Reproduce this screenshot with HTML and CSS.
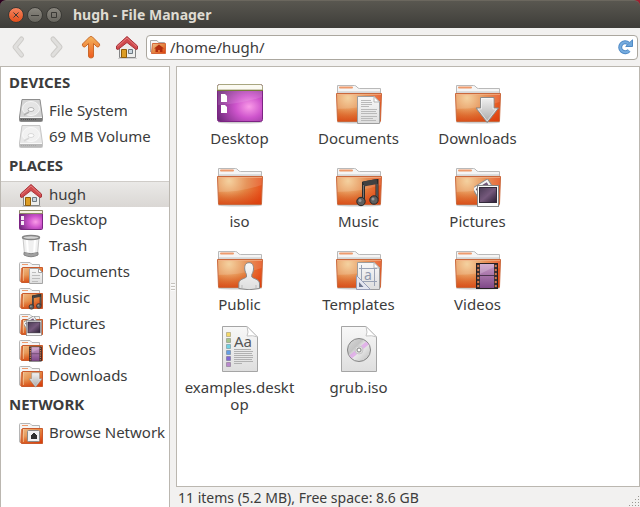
FILE: index.html
```html
<!doctype html>
<html lang="en">

<head>
  <meta charset="utf-8" />
  <meta name="viewport" content="width=device-width,initial-scale=1" />
  <title>hugh - File Manager</title>
  <link rel="stylesheet" href="styles.css">
</head>

<body>
  <svg class="sprites" width="0" height="0" aria-hidden="true">
    <defs>
      <radialGradient id="g-folder" gradientUnits="userSpaceOnUse" cx="13" cy="22" r="36">
        <stop offset="0" stop-color="#f3cb92" />
        <stop offset=".5" stop-color="#e38443" />
        <stop offset="1" stop-color="#e84a16" />
      </radialGradient>
      <linearGradient id="g-small" x1="0" y1="0" x2="1" y2="1">
        <stop offset="0" stop-color="#efc08c" />
        <stop offset=".5" stop-color="#e48742" />
        <stop offset="1" stop-color="#dc3c0c" />
      </linearGradient>
      <linearGradient id="g-base" x1="0" y1="0" x2="0" y2="1">
        <stop offset=".5" stop-color="#d8430f" stop-opacity="0" />
        <stop offset="1" stop-color="#d03a0a" stop-opacity=".6" />
      </linearGradient>
      <linearGradient id="g-paper" x1="0" y1="0" x2="0" y2="1">
        <stop offset="0" stop-color="#f8f8f8" />
        <stop offset="1" stop-color="#dedede" />
      </linearGradient>
      <linearGradient id="g-metal" x1="0" y1="0" x2="0" y2="1">
        <stop offset="0" stop-color="#f2f2f2" />
        <stop offset="1" stop-color="#a9a9a9" />
      </linearGradient>
      <radialGradient id="g-desk" cx=".7" cy=".6" r=".75">
        <stop offset="0" stop-color="#fa9be8" />
        <stop offset=".4" stop-color="#ce54cc" />
        <stop offset="1" stop-color="#70297c" />
      </radialGradient>
      <linearGradient id="g-photo" x1="0" y1="0" x2="1" y2="1">
        <stop offset="0" stop-color="#4a3b54" />
        <stop offset=".5" stop-color="#75597c" />
        <stop offset="1" stop-color="#291d33" />
      </linearGradient>
      <linearGradient id="g-film" x1="0" y1="0" x2="0" y2="1">
        <stop offset="0" stop-color="#c99bc6" />
        <stop offset="1" stop-color="#7f4788" />
      </linearGradient>
      <linearGradient id="g-up" x1="0" y1="0" x2="0" y2="1">
        <stop offset="0" stop-color="#f3b45c" />
        <stop offset="1" stop-color="#ee5a1e" />
      </linearGradient>
      <linearGradient id="g-disc" x1="0" y1="0" x2="1" y2="1">
        <stop offset="0" stop-color="#dcdcdc" />
        <stop offset=".35" stop-color="#c4c4c4" />
        <stop offset=".5" stop-color="#eeeeee" />
        <stop offset="1" stop-color="#bcbcbc" />
      </linearGradient>
    </defs>

    <!-- folders -->
    <symbol id="folder" viewBox="0 0 48 48">
      <ellipse cx="24" cy="46.5" rx="22" ry="1" fill="#0003" />
      <path d="M2.500 17V9.500H19.500Q21 9.500 22 11T24.500 12.500H45.500V17z" fill="#f5f5f5" stroke="#b9b9b9" />
      <path d="M5 11.500H17" stroke="#ee9a6c" stroke-width="2" stroke-linecap="round" />
      <path d="M3 15.500H45" stroke="#dedede" />
      <path d="M1.500 17.500H46.500L45.500 45Q45.500 45.500 45 45.500H3Q2.500 45.500 2.500 45z" fill="url(#g-folder)" />
      <path d="M1.500 17.500H46.500L45.500 45Q45.500 45.500 45 45.500H3Q2.500 45.500 2.500 45z" fill="url(#g-base)" stroke="#c9683c" />
      <path d="M2 18H46L45.600 26Q25 33 2.400 33z" fill="#fff" opacity=".13" />
      <path d="M2 18.500H46" stroke="#f3b48a" opacity=".7" />
    </symbol>
    <symbol id="folder-small" viewBox="0 0 24 24">
      <path d="M1 21.500Q.5 21.500 .5 20V3.500Q.5 2.500 1.500 2.500H11L13 4.500H20.500V8" fill="#f4f4f4" stroke="#b5b5b5" />
      <path d="M3 4.500H9" stroke="#ee9a6c" />
      <path d="M2 8H22V22H1z" fill="#e4834f" />
      <path d="M3.500 7.500H23.500V22.500H2.500z" fill="url(#g-small)" />
      <path d="M3.500 7.500H23.500V22.500H2.500z" fill="url(#g-base)" stroke="#ca5a2c" />
      <path d="M4.500 8V21" stroke="#f8cda5" opacity=".6" />
    </symbol>

    <!-- emblems laid over the lower right corner of a folder -->
    <symbol id="e-documents" viewBox="0 0 28 28">
      <path d="M2.500 .5H19L24.500 6V27.500H2.500z" fill="url(#g-paper)" stroke="#9d9d9d" />
      <path d="M19 .5V6H24.500z" fill="#fff" stroke="#b5b5b5" />
      <path d="M6 4.500H16M6 6.500H17M6 8.500H17M6 10.500H14M6 13.500H22M6 15.500H21M6 17.500H22M6 20.500H22M6 22.500H18M6 24.500H21" stroke="#b9b9b9" />
    </symbol>
    <symbol id="e-documents-small" viewBox="0 0 16 16">
      <path d="M1.500 .5H10.500L14.500 4.500V15.500H1.500z" fill="url(#g-paper)" stroke="#a5a5a5" />
      <path d="M10.500 .5V4.500H14.500z" fill="#fff" stroke="#a5a5a5" />
      <path d="M4 4.500H8M4 7.500H12M4 10.500H12M4 13.500H10" stroke="#bdbdbd" />
    </symbol>
    <symbol id="e-downloads" viewBox="0 0 28 28">
      <path d="M6.500 1.500H20V12H24.500L13.200 26.500L2 12H6.500z" fill="url(#g-metal)" stroke="#8b8b8b" />
      <path d="M7.500 2.500H19V13H22.500L13.200 25L4 13H7.500z" fill="none" stroke="#fff" opacity=".5" />
    </symbol>
    <symbol id="e-music" viewBox="0 0 28 28">
      <path d="M8.500 22V4L22 1.500V20" fill="none" stroke="#2b2b2b" stroke-width="3" />
      <path d="M8.500 5L22 2.500" stroke="#414141" stroke-width="5" />
      <path d="M8.500 21V6M22 19V5" stroke="#747474" />
      <circle cx="6" cy="22.500" r="4.200" fill="#5f5f5f" stroke="#282828" />
      <circle cx="19" cy="21" r="4.200" fill="#5f5f5f" stroke="#282828" />
      <circle cx="5" cy="21.500" r="1.500" fill="#999" />
      <circle cx="18" cy="20" r="1.500" fill="#999" />
    </symbol>
    <symbol id="e-pictures" viewBox="0 0 28 28">
      <g transform="rotate(-32 10 12)">
        <rect x="1.500" y="3.500" width="18" height="18" fill="#f4f4f4" stroke="#8b8b8b" />
        <rect x="4" y="6" width="13" height="12" fill="url(#g-photo)" />
      </g>
      <rect x="3.500" y="6.500" width="21" height="21" fill="#fafafa" stroke="#888" />
      <rect x="5.500" y="8.500" width="17" height="15" fill="url(#g-photo)" stroke="#332a3a" />
    </symbol>
    <symbol id="e-public" viewBox="0 0 28 28">
      <path d="M13 .7C9.500 .7 8.500 3.500 8.700 7C9 10 10 11 10.500 12.500V15C8 17 3.500 17 2.800 21V26.500Q13 29 23.500 26.500V21C22.500 17 18 17 15.800 15V12.500C16.500 11 17.300 10 17.500 7C17.700 3.500 16.500 .7 13 .7z" fill="url(#g-paper)" stroke="#888" />
      <path d="M6 23V26M20 23V26" stroke="#bbb" />
    </symbol>
    <symbol id="e-templates" viewBox="0 0 28 28">
      <path d="M2.500 .5H19L24.500 6V27.500H2.500z" fill="url(#g-paper)" stroke="#9d9d9d" />
      <path d="M19 .5V6H24.500z" fill="#fff" stroke="#b5b5b5" />
      <path d="M4 6.500H22M4 19.500H22M6.500 3V24M19.500 6V24" stroke="#9aa3b5" />
      <text x="13" y="18" text-anchor="middle" class="glyph-a">a</text>
      <path d="M1.500 13.500L15.500 27.500H1.500z" fill="#e3e6f0" stroke="#979fb8" />
      <path d="M4 20L8.500 25H4z" fill="#6f7891" />
    </symbol>
    <symbol id="e-videos" viewBox="0 0 28 28">
      <rect x="2.500" y="1.500" width="21" height="25" fill="#3b3033" stroke="#262023" />
      <rect x="6" y="2" width="14" height="24" fill="url(#g-film)" />
      <path d="M6 13.500H20" stroke="#4d3450" />
      <path d="M6 2H20V5L6 12z" fill="#fff" opacity=".2" />
      <path d="M4.200 3V26M21.800 3V26" stroke="#d07a50" stroke-width="2" stroke-dasharray="2 2" />
    </symbol>
    <symbol id="e-network" viewBox="0 0 16 16">
      <rect x=".5" y=".5" width="12" height="11" rx="1" fill="#f1f1f1" stroke="#8a8a8a" />
      <path d="M4 9V5H5V4H6V3H8V4H9V5H10V9z" fill="#2e2e2e" />
    </symbol>

    <!-- places and devices -->
    <symbol id="desktop" viewBox="0 0 48 48">
      <ellipse cx="24" cy="46.500" rx="22" ry="1" fill="#0003" />
      <rect x="1.500" y="8.500" width="45" height="37" rx="2" fill="url(#g-desk)" stroke="#7c2483" />
      <path d="M1.500 14V10.500Q1.500 8.500 3.500 8.500H44.500Q46.500 8.500 46.500 10.500V14z" fill="#fbfaf2" stroke="#a9a780" />
      <path d="M1 14.500H47" stroke="#78783d" />
      <path d="M2 15H46V21Q24 28 2 29z" fill="#fff" opacity=".12" />
      <path d="M5 18H9L11 20V26H5zM5 29H9L11 31V37H5z" fill="#fff" />
    </symbol>
    <symbol id="desktop-small" viewBox="0 0 24 24">
      <rect x=".5" y="2.500" width="23" height="19" rx="1" fill="url(#g-desk)" stroke="#7c2483" />
      <path d="M.5 5.500V2.500H23.500V5.500z" fill="#f3f1df" stroke="#8d8b66" />
      <path d="M2 8H5V12H2zM2 13H5V17H2z" fill="#fff" opacity=".9" />
    </symbol>
    <symbol id="home" viewBox="0 0 24 24">
      <path d="M4.500 12L12 5L20.500 12V22.500H4.500z" fill="#eeeeec" stroke="#858585" />
      <path d="M3 23.500H22" stroke="#0002" />
      <path d="M6.500 14.500H11.500V22.500H6.500z" fill="#dc9d25" stroke="#8f5d0a" />
      <path d="M13.500 14.500H17.500V18.500H13.500z" fill="#cad6df" stroke="#6e7a82" />
      <path d="M12 1.500L22.500 11V14L21 14.500L12 7.500L3 14.500L1.500 14V11z" fill="#d14a4d" stroke="#a8343a" stroke-linejoin="round" />
      <path d="M2.500 11.500L12 3L21.500 11.500" fill="none" stroke="#e27b7c" />
    </symbol>
    <symbol id="drive" viewBox="0 0 24 24">
      <path d="M3 .5H21L23.500 18V21.500Q23.500 22.500 22.500 22.500H1.500Q.5 22.500 .5 21.500V18z" fill="#d3d3d3" stroke="#8d8d8d" />
      <path d="M1 19H23V22H1z" fill="#777" />
      <path d="M1 18.500H23" stroke="#f4f4f4" />
      <path d="M2 20.500H17" stroke="#555" stroke-dasharray="1 1" />
      <ellipse cx="12" cy="9.500" rx="8.500" ry="7" fill="#e4e4e4" stroke="#f6f6f6" />
      <ellipse cx="12" cy="10.500" rx="3" ry="2" fill="#fafafa" stroke="#b4b4b4" />
      <path d="M5 16L10 13" stroke="#b0b0b0" stroke-width="1.500" />
    </symbol>
    <symbol id="trash" viewBox="0 0 24 24">
      <path d="M4 4H20L18.500 20Q12 24 5.500 20z" fill="#f0f0f0" stroke="#c9c9c9" />
      <path d="M8 6L9 20M16 6L15 20" stroke="#fff" stroke-width="2" />
      <path d="M5 18.500Q12 21 19 18.500V21Q12 24.500 5 21z" fill="#a2a2a2" stroke="#858585" />
      <ellipse cx="12" cy="3.500" rx="8.500" ry="2" fill="#d4d4d4" stroke="#858585" stroke-width="1.500" />
    </symbol>

    <!-- files -->
    <symbol id="page" viewBox="0 0 48 48">
      <path d="M6.500 1.500H31L41.500 12V46.500H6.500z" fill="url(#g-paper)" stroke="#a5a5a5" />
      <path d="M31 1.500Q33 8 31 11Q37 10 41.500 12z" fill="#fff" stroke="#c4c4c4" />
    </symbol>
    <symbol id="file-text" viewBox="0 0 48 48">
      <use href="#page" width="48" height="48" />
      <g stroke="#0003">
        <rect x="10.500" y="7.500" width="4" height="4" fill="#f4d868" />
        <rect x="10.500" y="13.500" width="4" height="4" fill="#a7c48b" />
        <rect x="10.500" y="19.500" width="4" height="4" fill="#70d1e4" />
        <rect x="10.500" y="25.500" width="4" height="4" fill="#659ee4" />
        <rect x="10.500" y="31.500" width="4" height="4" fill="#8067d5" />
        <rect x="10.500" y="37.500" width="4" height="4" fill="#b988cd" />
      </g>
      <text x="18" y="22" class="glyph-aa">Aa</text>
      <path d="M18 24.500H35M18 26.500H37M18 28.500H36M18 30.500H37M18 32.500H37M18 34.500H36M18 36.500H37M18 38.500H26" stroke="#b1b1b1" />
    </symbol>
    <symbol id="file-iso" viewBox="0 0 48 48">
      <use href="#page" width="48" height="48" />
      <circle cx="24" cy="25" r="11.500" fill="url(#g-disc)" stroke="#858585" />
      <path d="M15.500 32L32.500 18" stroke="#dfa6e8" stroke-width="4" opacity=".8" />
      <circle cx="24" cy="25" r="4" fill="#dedede" stroke="#c9c9c9" />
      <circle cx="24" cy="25" r="2" fill="#fff" stroke="#858585" />
    </symbol>
  </svg>

  <div class="window">
    <header class="titlebar">
      <button type="button" class="wbtn close" aria-label="Close">
        <svg viewBox="0 0 14 14"><path d="M4.500 4.500L9.500 9.500M9.500 4.500L4.500 9.500" /></svg>
      </button>
      <button type="button" class="wbtn" aria-label="Minimize">
        <svg viewBox="0 0 14 14"><path d="M3 7.500H11" /></svg>
      </button>
      <button type="button" class="wbtn" aria-label="Maximize">
        <svg viewBox="0 0 14 14"><path d="M4.500 4.500H9.500V9.500H4.500z" /></svg>
      </button>
      <h1 class="title">hugh - File Manager</h1>
    </header>

    <nav class="toolbar" aria-label="Navigation">
      <button type="button" class="tool" aria-label="Back" disabled>
        <svg viewBox="0 0 24 24">
          <path d="M14.500 4L8 12L14.500 20" class="arrow-edge" />
          <path d="M14.500 4L8 12L14.500 20" class="arrow" />
        </svg>
      </button>
      <button type="button" class="tool" aria-label="Forward" disabled>
        <svg viewBox="0 0 24 24">
          <path d="M10 4L17 12L10 20" class="arrow-edge" />
          <path d="M10 4L17 12L10 20" class="arrow" />
        </svg>
      </button>
      <button type="button" class="tool" aria-label="Up">
        <svg viewBox="0 0 24 24">
          <path d="M12 1.500Q13 1.500 13.500 2L20.500 9Q21 10.500 20 11.500Q18.500 12.500 17.500 11.500L14.500 8.500V21Q14.500 23 12 23T9.500 21V8.500L6.500 11.500Q5.500 12.500 4 11.500Q3 10.500 3.500 9L10.500 2Q11 1.500 12 1.500z" fill="url(#g-up)" stroke="#c9692a" />
        </svg>
      </button>
      <button type="button" class="tool" aria-label="Home">
        <svg viewBox="0 0 24 24"><use href="#home" /></svg>
      </button>
      <div class="path">
        <svg class="path-icon" viewBox="0 0 16 16">
          <path d="M.5 13V1.500H7L8.500 3.500H14.500V7" fill="#f5f5f5" stroke="#aaa" />
          <path d="M2.500 4.500H15.500V14.500H1.500z" fill="url(#g-small)" stroke="#d5683b" />
          <path d="M9 5.500L14 9.500H12.500V13H10V11H8V13H5.500V9.500H4z" fill="#b12c0e" />
        </svg>
        <input type="text" class="path-input" aria-label="Location" value="/home/hugh/">
        <button type="button" class="reload" aria-label="Reload">
          <svg viewBox="0 0 16 16">
            <path d="M12 11.500A5 5 0 1 1 11.500 4.500" fill="none" stroke="#4f8ac6" stroke-width="4" />
            <path d="M15.500 .8V7.500H8.700z" fill="#6fa8dc" stroke="#4f8ac6" />
            <path d="M12 11.500A5 5 0 1 1 11.500 4.500" fill="none" stroke="#76acdf" stroke-width="2" />
          </svg>
        </button>
      </div>
    </nav>

    <div class="main">
      <aside class="sidebar">
        <h2>DEVICES</h2>
        <a href="#"><svg viewBox="0 0 24 24"><use href="#drive" /></svg><span>File System</span></a>
        <a href="#" class="unmounted"><svg viewBox="0 0 24 24"><use href="#drive" /></svg><span>69 MB Volume</span></a>
        <h2>PLACES</h2>
        <a href="#" class="selected"><svg viewBox="0 0 24 24"><use href="#home" /></svg><span>hugh</span></a>
        <a href="#"><svg viewBox="0 0 24 24"><use href="#desktop-small" /></svg><span>Desktop</span></a>
        <a href="#"><svg viewBox="0 0 24 24"><use href="#trash" /></svg><span>Trash</span></a>
        <a href="#"><svg viewBox="0 0 24 24"><use href="#folder-small" /><use href="#e-documents-small" x="9" y="8" width="16" height="16" /></svg><span>Documents</span></a>
        <a href="#"><svg viewBox="0 0 24 24"><use href="#folder-small" /><use href="#e-music" x="9" y="8" width="16" height="16" /></svg><span>Music</span></a>
        <a href="#"><svg viewBox="0 0 24 24"><use href="#folder-small" /><use href="#e-pictures" x="5" y="4" width="20" height="20" /></svg><span>Pictures</span></a>
        <a href="#"><svg viewBox="0 0 24 24"><use href="#folder-small" /><use href="#e-videos" x="9" y="8" width="16" height="16" /></svg><span>Videos</span></a>
        <a href="#"><svg viewBox="0 0 24 24"><use href="#folder-small" /><use href="#e-downloads" x="9" y="8" width="16" height="16" /></svg><span>Downloads</span></a>
        <h2>NETWORK</h2>
        <a href="#"><svg viewBox="0 0 24 24"><use href="#folder-small" /><use href="#e-network" x="8" y="9" width="16" height="16" /></svg><span>Browse Network</span></a>
      </aside>

      <div class="splitter"></div>

      <div class="content">
        <main class="files">
          <a href="#"><svg viewBox="0 0 48 48"><use href="#desktop" /></svg><span>Desktop</span></a>
          <a href="#"><svg viewBox="0 0 48 48"><use href="#folder" /><use href="#e-documents" x="20" y="20" width="28" height="28" /></svg><span>Documents</span></a>
          <a href="#"><svg viewBox="0 0 48 48"><use href="#folder" /><use href="#e-downloads" x="20" y="20" width="28" height="28" /></svg><span>Downloads</span></a>
          <a href="#"><svg viewBox="0 0 48 48"><use href="#folder" /></svg><span>iso</span></a>
          <a href="#"><svg viewBox="0 0 48 48"><use href="#folder" /><use href="#e-music" x="20" y="20" width="28" height="28" /></svg><span>Music</span></a>
          <a href="#"><svg viewBox="0 0 48 48"><use href="#folder" /><use href="#e-pictures" x="20" y="20" width="28" height="28" /></svg><span>Pictures</span></a>
          <a href="#"><svg viewBox="0 0 48 48"><use href="#folder" /><use href="#e-public" x="20" y="20" width="28" height="28" /></svg><span>Public</span></a>
          <a href="#"><svg viewBox="0 0 48 48"><use href="#folder" /><use href="#e-templates" x="20" y="20" width="28" height="28" /></svg><span>Templates</span></a>
          <a href="#"><svg viewBox="0 0 48 48"><use href="#folder" /><use href="#e-videos" x="20" y="20" width="28" height="28" /></svg><span>Videos</span></a>
          <a href="#"><svg viewBox="0 0 48 48"><use href="#file-text" /></svg><span>examples.desktop</span></a>
          <a href="#"><svg viewBox="0 0 48 48"><use href="#file-iso" /></svg><span>grub.iso</span></a>
        </main>
        <footer class="status">
          <span>11 items (5.2 MB), Free space: 8.6 GB</span>
          <svg class="grip" viewBox="0 0 12 12">
            <path d="M10 1h1v1h-1zM7 4h1v1h-1zM10 4h1v1h-1zM4 7h1v1h-1zM7 7h1v1h-1zM10 7h1v1h-1zM1 10h1v1h-1zM4 10h1v1h-1zM7 10h1v1h-1zM10 10h1v1h-1z" fill="#9b9892" />
          </svg>
        </footer>
      </div>
    </div>
  </div>
</body>

</html>
```

FILE: styles.css
```css
html,
body {
  height: 100%;
  margin: 0;
}

* {
  box-sizing: border-box;
}

body {
  font-family: "Noto Sans", "Open Sans", sans-serif;
  font-size: 15px;
  line-height: 17px;
  color: #3c3c3c;
  background: linear-gradient(to right, #2c001e 50%, #a02030 50%);
}

a {
  color: inherit;
  text-decoration: none;
}

button {
  padding: 0;
  border: 0;
  background: none;
}

svg {
  display: block;
  flex-shrink: 0;
}

.window {
  height: 100%;
  display: flex;
  flex-direction: column;
}

/* title bar */
.titlebar {
  display: flex;
  align-items: center;
  gap: 3px;
  height: 28px;
  padding-left: 8px;
  border-radius: 6px 6px 0 0;
  border-top: 1px solid #6b675e;
  background: linear-gradient(#595750, #3e3d39);
}

.wbtn {
  width: 16px;
  height: 16px;
  border: 1px solid #3a3935;
  border-radius: 50%;
  background: linear-gradient(#8a877f, #68665f);
}

.wbtn svg {
  width: 14px;
  height: 14px;
  fill: none;
  stroke: #3a3935;
}

.wbtn.close {
  background: linear-gradient(#f58560, #e24e1b);
}

.title {
  margin: 0 0 0 8px;
  font-size: 14px;
  line-height: 20px;
  font-weight: bold;
  color: #dfdbd2;
}

/* toolbar */
.toolbar {
  display: flex;
  align-items: center;
  height: 38px;
  padding: 0 2px 0 1px;
  background: #f2f1f0;
}

.tool {
  width: 36px;
  height: 36px;
  display: flex;
  align-items: center;
  justify-content: center;
}

.tool svg {
  width: 24px;
  height: 24px;
}

.arrow,
.arrow-edge {
  fill: none;
  stroke: #e0dfdd;
  stroke-width: 3;
  stroke-linecap: round;
  stroke-linejoin: round;
}

.arrow-edge {
  stroke: #cdcbc8;
  stroke-width: 5;
}

.path {
  flex: 1;
  display: flex;
  align-items: center;
  height: 25px;
  margin-left: 1px;
  padding: 0 4px 0 3px;
  border: 1px solid #aba79f;
  border-radius: 4px;
  background: #fff;
}

.path-icon,
.reload svg {
  width: 16px;
  height: 16px;
}

.path-input {
  flex: 1;
  min-width: 0;
  padding: 0 4px;
  border: 0;
  outline: 0;
  font: inherit;
  line-height: 20px;
  color: inherit;
  background: none;
}

/* body */
.main {
  flex: 1;
  display: flex;
  min-height: 0;
  background: #f2f1f0;
}

.sidebar {
  width: 170px;
  border: 1px solid #bbb7b0;
  border-bottom: 0;
  background: #fff;
}

.sidebar h2 {
  margin: 0;
  padding: 7px 8px;
  font-size: 15px;
  line-height: 17px;
}

.sidebar a {
  display: flex;
  align-items: center;
  gap: 6px;
  height: 26px;
  padding-left: 18px;
  white-space: nowrap;
}

.sidebar a svg {
  width: 24px;
  height: 24px;
}

.sidebar a span {
  line-height: 18px;
  padding-bottom: 2px;
}

.sidebar .selected {
  border-top: 1px solid #cfccc8;
  background: linear-gradient(#eae9e7, #dad7d4);
}

.sidebar .unmounted svg {
  opacity: .5;
}

.splitter {
  width: 6px;
  align-self: center;
  height: 8px;
  background: repeating-linear-gradient(#c5c2bd, #c5c2bd 1px, #fff 1px, #f2f1f0 3px) content-box;
  padding: 0 1px;
}

.content {
  flex: 1;
  display: flex;
  flex-direction: column;
  min-width: 0;
}

.files {
  flex: 1;
  display: grid;
  grid-template-columns: repeat(3, 119px);
  align-content: start;
  gap: 11px 0;
  padding: 9px 3px;
  border: 1px solid #bbb7b0;
  background: #fff;
}

.files a {
  display: flex;
  flex-direction: column;
  align-items: center;
  gap: 6px;
  height: 72px;
}

.files a svg {
  width: 48px;
  height: 48px;
}

.files span {
  max-width: 114px;
  text-align: center;
  word-break: break-all;
}

.status {
  display: flex;
  justify-content: space-between;
  align-items: flex-end;
  height: 20px;
  padding-left: 2px;
  font-size: 14px;
}

.status span {
  align-self: center;
}

.grip {
  width: 12px;
  height: 12px;
}

.sprites {
  position: absolute;
}

.glyph-a {
  font: 14px "Noto Sans", sans-serif;
  fill: #8f98ac;
}

.glyph-aa {
  font: 15px "Noto Sans", sans-serif;
  fill: #555;
}
```
